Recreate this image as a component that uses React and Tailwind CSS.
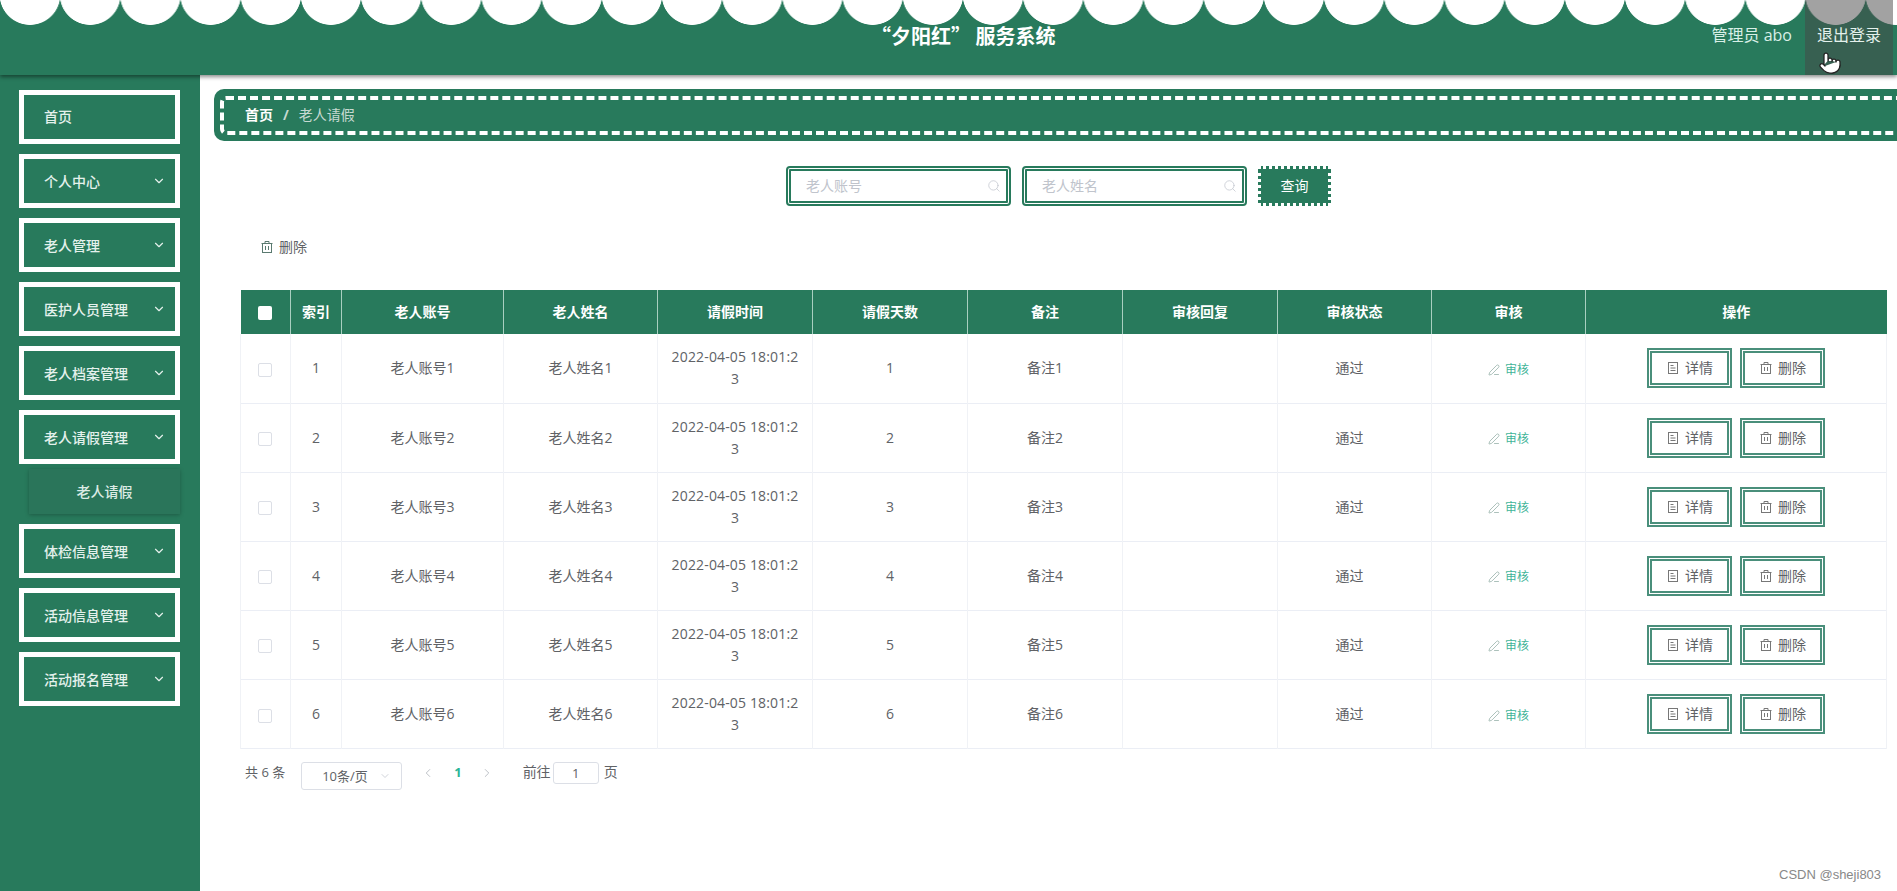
import { ChevronDown, ChevronLeft, ChevronRight, PenLine, Pointer, Search } from 'lucide-react'

const FONT = '[font-family:"Open_Sans","Noto_Sans_CJK_SC",sans-serif]'

const MENU = ['个人中心', '老人管理', '医护人员管理', '老人档案管理', '老人请假管理', '体检信息管理', '活动信息管理', '活动报名管理']
const TITLES = ['索引', '老人账号', '老人姓名', '请假时间', '请假天数', '备注', '审核回复', '审核状态', '审核']
const ROWS = [1, 2, 3, 4, 5, 6]

function DocIcon({ className }) {
  return (
    <svg viewBox="0 0 14 14" fill="none" stroke="currentColor" strokeWidth="1" className={className}>
      <rect x="2.5" y="1.5" width="9" height="11" />
      <path d="M4.5 4.5h3M4.5 7h5M4.5 9.5h5" />
    </svg>
  )
}

function BinIcon({ className }) {
  return (
    <svg viewBox="0 0 14 14" fill="none" stroke="currentColor" strokeWidth="1" className={className}>
      <path d="M1.5 3.5h11M5 3.5v-2h4v2" />
      <rect x="2.5" y="3.5" width="9" height="9" />
      <path d="M5.5 6v4M8.5 6v4" />
    </svg>
  )
}

function MenuItem({ label, arrow = true }) {
  return (
    <div className="flex h-[54px] items-center justify-between border-[5px] border-white pl-5 pr-[9px] text-sm font-medium text-[#e4f1ec]">
      <span className={arrow ? 'pt-0.5' : ''}>{label}</span>
      {arrow && <ChevronDown className="h-[14px] w-[14px]" strokeWidth={2} />}
    </div>
  )
}

function Sidebar() {
  return (
    <aside className="flex w-[200px] shrink-0 flex-col gap-[10px] bg-[#287a5c] pl-[19px] pr-[20px] pt-[15px]">
      <MenuItem label="首页" arrow={false} />
      {MENU.map((m) =>
        m === '老人请假管理' ? (
          <div key={m} className="flex flex-col gap-[5px]">
            <MenuItem label={m} />
            <div className="ml-[10px] flex h-[45px] items-center justify-center bg-[#2a755a] text-sm font-medium text-[#dcebe5] shadow-[0_1px_4px_rgba(0,0,0,0.25)]">
              老人请假
            </div>
          </div>
        ) : (
          <MenuItem key={m} label={m} />
        )
      )}
    </aside>
  )
}

function SearchBox({ placeholder }) {
  return (
    <div className="flex h-10 w-[225px] items-center justify-between rounded border-[5px] border-double border-[#287a5c] bg-white pl-[15px] pr-[5px] text-sm text-[#c0c4cc]">
      <span>{placeholder}</span>
      <Search className="h-[14px] w-[14px]" strokeWidth={1.25} />
    </div>
  )
}

function ActionButton({ icon: Icon, label }) {
  return (
    <button className="flex h-10 w-[85px] items-center justify-center gap-[5px] border-[5px] border-double border-[#4a8f7b] bg-white text-sm text-[#606266]">
      <Icon className="h-[14px] w-[14px] text-[#777]" />
      {label}
    </button>
  )
}

function DataTable() {
  return (
    <table className="w-[1646px] table-fixed border-collapse text-center text-sm text-[#606266]">
      <colgroup>
        <col className="w-[50px]" />
        <col className="w-[51px]" />
        <col className="w-[162px]" />
        <col className="w-[154px]" />
        <col className="w-[155px]" />
        <col className="w-[155px]" />
        <col className="w-[155px]" />
        <col className="w-[155px]" />
        <col className="w-[154px]" />
        <col className="w-[154px]" />
        <col className="w-[301px]" />
      </colgroup>
      <thead>
        <tr className="h-[44px] bg-[#287a5c] text-sm font-bold text-white">
          <th className="border-r border-[#a9cfc0]">
            <span className="inline-block h-[14px] w-[14px] rounded-[2px] bg-white align-middle" />
          </th>
          {TITLES.map((t) => (
            <th key={t} className="border-r border-[#a9cfc0] font-bold">{t}</th>
          ))}
          <th className="font-bold">操作</th>
        </tr>
      </thead>
      <tbody>
        {ROWS.map((n) => (
          <tr key={n} className="h-[69.17px] border-b border-[#ebeef5]">
            <td className="border-x border-[#f0f2f6]">
              <span className="ml-[-2px] inline-block h-[14px] w-[14px] rounded-[2px] border border-[#dcdfe6] bg-white align-middle" />
            </td>
            <td className="border-r border-[#f0f2f6]">{n}</td>
            <td className="border-r border-[#f0f2f6]">老人账号{n}</td>
            <td className="border-r border-[#f0f2f6]">老人姓名{n}</td>
            <td className="border-r border-[#f0f2f6] px-3 leading-[22px] tracking-[0.15px] break-all">2022-04-05 18:01:23</td>
            <td className="border-r border-[#f0f2f6]">{n}</td>
            <td className="border-r border-[#f0f2f6]">备注{n}</td>
            <td className="border-r border-[#f0f2f6]"></td>
            <td className="border-r border-[#f0f2f6] pr-[10px]">通过</td>
            <td className="border-r border-[#f0f2f6]">
              <span className="inline-flex items-center gap-[5px] align-middle text-xs text-[#3fb498]">
                <PenLine className="h-3 w-3 text-[#7a9c92]" strokeWidth={1.25} />
                审核
              </span>
            </td>
            <td className="border-r border-[#f0f2f6]">
              <div className="flex justify-center gap-2">
                <ActionButton icon={DocIcon} label="详情" />
                <ActionButton icon={BinIcon} label="删除" />
              </div>
            </td>
          </tr>
        ))}
      </tbody>
    </table>
  )
}

function Pagination() {
  return (
    <div className="ml-[5px] mt-[13px] flex items-start text-[13px] leading-[21px] text-[#606266]">
      <span>共 6 条</span>
      <div className="ml-4 flex h-7 w-[101px] items-center justify-between rounded-[3px] border border-[#dcdfe6] pl-5 pr-[10px]">
        <span>10条/页</span>
        <ChevronDown className="h-3 w-3 text-[#c0c4cc]" strokeWidth={1.5} />
      </div>
      <ChevronLeft className="ml-[19px] mt-[4px] h-[14px] w-[14px] text-[#b4b8bf]" strokeWidth={1.5} />
      <span className="ml-[19px] font-bold text-[#2bb596]">1</span>
      <ChevronRight className="ml-[18px] mt-[4px] h-[14px] w-[14px] text-[#b4b8bf]" strokeWidth={1.5} />
      <span className="ml-[29px] text-sm">前往</span>
      <div className="ml-[2px] h-[22px] w-[46px] rounded-[3px] border border-[#dcdfe6] text-center leading-[20px]">1</div>
      <span className="ml-[5px] text-sm">页</span>
    </div>
  )
}

export default function App() {
  return (
    <div className={`flex h-[891px] flex-col overflow-hidden bg-white ${FONT}`}>
      <header className="relative z-10 flex h-[75px] shrink-0 items-start bg-[#287a5c] pt-5 shadow-[0_2px_4px_rgba(0,0,0,0.45)]">
        <div className="absolute inset-x-0 top-0 h-[26px] bg-[radial-gradient(circle_at_30px_-5.5px,#fff_30px,transparent_30.7px)] bg-[length:60.2px_30px] bg-repeat-x" />
        <div className="ml-[871px] text-xl font-bold leading-[32px] text-white [font-family:'Noto_Sans_CJK_SC',sans-serif]">“夕阳红” 服务系统</div>
        <div className="ml-auto mr-[13px] text-base leading-[30px] text-[#d9efe7]">管理员 abo</div>
        <div className="relative mr-[4px] -mt-5 h-[75px] w-[88px] bg-[#454545]/50 pt-5 text-center text-base leading-[30px] text-[#e4f1ec]">
          退出登录
          <Pointer className="absolute left-[13px] top-[51px] h-6 w-6 fill-white text-[#222]" strokeWidth={1.25} />
        </div>
      </header>

      <div className="flex min-h-0 flex-1">
        <Sidebar />
        <main className="min-w-0 flex-1 overflow-hidden">
          <div className="ml-[14px] mr-[-20px] mt-[14px] rounded-[10px] bg-[#287a5c] p-[6px] pt-[7px]">
            <div className="flex h-[39px] items-center gap-[10px] rounded-[6px] border-4 border-dashed border-white pb-0.5 pl-[21px] text-sm text-[#c6d9d1]">
              <span className="font-bold text-white">首页</span>
              <span className="font-bold">/</span>
              <span>老人请假</span>
            </div>
          </div>

          <div className="mt-[25px] flex justify-center gap-[11px] pl-5">
            <SearchBox placeholder="老人账号" />
            <SearchBox placeholder="老人姓名" />
            <button className="h-10 w-[73px] border-[3px] border-dotted border-white bg-[#287a5c] text-sm text-white">查询</button>
          </div>

          <div className="ml-[60px] mt-[21px] flex h-10 items-center gap-[5px] text-sm text-[#606266]">
            <BinIcon className="h-[14px] w-[14px] text-[#5a7a70]" />
            删除
          </div>

          <div className="ml-[40px] mt-[23px]">
            <DataTable />
            <Pagination />
          </div>
        </main>
      </div>

      <div className="pointer-events-none absolute left-[1779px] top-[865px] text-[13px] text-[#888] [font-family:'Liberation_Sans',sans-serif]">
        CSDN @sheji803
      </div>
    </div>
  )
}
